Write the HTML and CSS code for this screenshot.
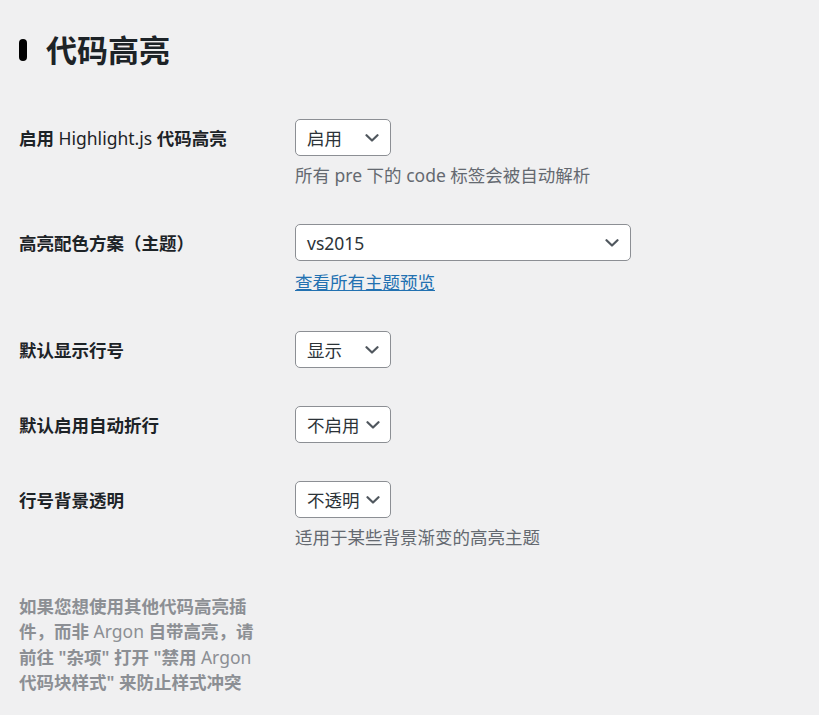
FILE: index.html
```html
<!DOCTYPE html>
<html lang="zh-CN">
<head>
<meta charset="utf-8">
<title>代码高亮</title>
<link rel="stylesheet" href="styles.css">
</head>
<body>
<div class="page">
  <h1 class="title"><span class="bar"></span>代码高亮</h1>

  <div class="row">
    <div class="label">启用 <span class="latin">Highlight.js</span> 代码高亮</div>
    <div class="field">
      <div class="select sm"><span>启用</span><svg class="chev" viewBox="0 0 14 8" width="14" height="8"><path d="M1.5 1.2 7 6.5 12.5 1.2"/></svg></div>
      <p class="desc">所有 pre 下的 code 标签会被自动解析</p>
    </div>
  </div>

  <div class="row">
    <div class="label">高亮配色方案（主题）</div>
    <div class="field">
      <div class="select lg"><span>vs2015</span><svg class="chev" viewBox="0 0 14 8" width="14" height="8"><path d="M1.5 1.2 7 6.5 12.5 1.2"/></svg></div>
      <p class="link-line"><a class="link" href="#">查看所有主题预览</a></p>
    </div>
  </div>

  <div class="row">
    <div class="label">默认显示行号</div>
    <div class="field">
      <div class="select sm"><span>显示</span><svg class="chev" viewBox="0 0 14 8" width="14" height="8"><path d="M1.5 1.2 7 6.5 12.5 1.2"/></svg></div>
    </div>
  </div>

  <div class="row">
    <div class="label">默认启用自动折行</div>
    <div class="field">
      <div class="select sm tight"><span>不启用</span><svg class="chev" viewBox="0 0 14 8" width="14" height="8"><path d="M1.5 1.2 7 6.5 12.5 1.2"/></svg></div>
    </div>
  </div>

  <div class="row">
    <div class="label">行号背景透明</div>
    <div class="field">
      <div class="select sm tight"><span>不透明</span><svg class="chev" viewBox="0 0 14 8" width="14" height="8"><path d="M1.5 1.2 7 6.5 12.5 1.2"/></svg></div>
      <p class="desc">适用于某些背景渐变的高亮主题</p>
    </div>
  </div>

  <div class="note">如果您想使用其他代码高亮插件，而非 <span class="latin">Argon</span> 自带高亮，请前往 "杂项" 打开 "禁用 <span class="latin">Argon</span> 代码块样式" 来防止样式冲突</div>
</div>
</body>
</html>
```

FILE: styles.css
```css
html, body {
  margin: 0;
  padding: 0;
  background: #f0f0f1;
}
body {
  font-family: "Noto Sans", "Noto Sans CJK SC", sans-serif;
  font-size: 17.5px;
  color: #1d2327;
}
.page {
  padding: 0 19px;
  width: 781px;
  height: 715px;
  overflow: hidden;
}
.title {
  margin: 0;
  padding-top: 30px;
  margin-bottom: 30px;
  height: 40px;
  line-height: 40px;
  display: flex;
  align-items: center;
  font-size: 31px;
  font-weight: 700;
  color: #1d2327;
}
.bar {
  display: inline-block;
  width: 8px;
  height: 22px;
  border-radius: 4px;
  background: #000;
  margin-right: 19px;
}
.row {
  display: flex;
}
.label {
  width: 276px;
  flex: none;
  padding: 27px 0 25px;
  line-height: 22px;
  font-weight: 600;
}
.latin {
  font-weight: 400;
}
.field {
  padding: 19px 0;
}
.select {
  box-sizing: border-box;
  height: 37px;
  border: 1px solid #8c8f94;
  border-radius: 5px;
  background: #fff;
  display: flex;
  align-items: center;
  justify-content: space-between;
  padding: 0 11px 0 11px;
  color: #2c3338;
  line-height: 22px;
}
.select.sm { width: 96px; }
.select.sm.tight { padding-left: 11px; padding-right: 10px; }
.select.lg { width: 336px; }
.chev {
  fill: none;
  stroke: #50575e;
  stroke-width: 2.2;
  stroke-linecap: round;
  stroke-linejoin: round;
  flex: none;
}
.desc {
  margin: 8px 0 0;
  line-height: 22px;
  color: #646970;
}
.link-line {
  margin: 10px 0 0;
  line-height: 22px;
}
.link {
  color: #2271b1;
  text-decoration: underline;
}
.note {
  width: 245px;
  padding-top: 27px;
  line-height: 25.3px;
  font-weight: 600;
  color: #8c8f94;
}
```
